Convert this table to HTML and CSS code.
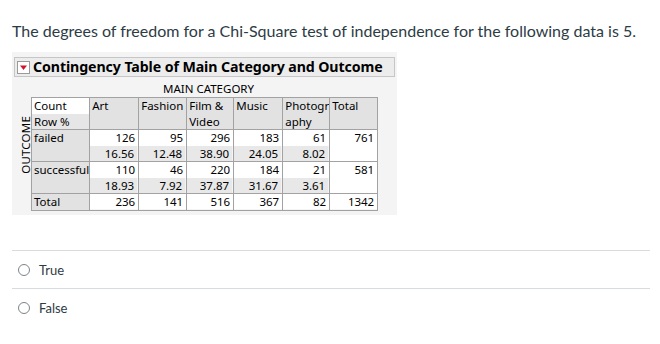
FILE: index.html
```html
<!DOCTYPE html>
<html>
<head>
<meta charset="utf-8">
<link rel="stylesheet" href="styles.css">
</head>
<body>
<div class="question">
  <p class="prompt">The degrees of freedom for a Chi-Square test of independence for the following data is 5.</p>
  <div class="report">
    <div class="report-title">
      <span class="disclosure"><svg width="11" height="11" viewBox="0 0 11 11"><path d="M2 3.5 L9 3.5 L5.5 8 Z" fill="#d0142c"/></svg></span>
      <span class="title-text">Contingency Table of Main Category and Outcome</span>
    </div>
    <div class="main-cat">MAIN CATEGORY</div>
    <div class="table-wrap">
      <div class="outcome"><span>OUTCOME</span></div>
      <table class="ct">
        <colgroup>
          <col class="c-label"><col class="c-art"><col class="c-fash"><col class="c-film"><col class="c-music"><col class="c-photo"><col class="c-total">
        </colgroup>
        <tr class="head">
          <td class="key"><div class="l1">Count</div><div class="l2">Row %</div></td>
          <th>Art</th>
          <th>Fashion</th>
          <th>Film &amp;<br>Video</th>
          <th>Music</th>
          <th>Photogr<br>aphy</th>
          <th>Total</th>
        </tr>
        <tr class="body">
          <td class="rl">failed</td>
          <td><div class="n">126</div><div class="p">16.56</div></td>
          <td><div class="n">95</div><div class="p">12.48</div></td>
          <td><div class="n">296</div><div class="p">38.90</div></td>
          <td><div class="n">183</div><div class="p">24.05</div></td>
          <td><div class="n">61</div><div class="p">8.02</div></td>
          <td><div class="n">761</div><div class="e"></div></td>
        </tr>
        <tr class="body">
          <td class="rl">successful</td>
          <td><div class="n">110</div><div class="p">18.93</div></td>
          <td><div class="n">46</div><div class="p">7.92</div></td>
          <td><div class="n">220</div><div class="p">37.87</div></td>
          <td><div class="n">184</div><div class="p">31.67</div></td>
          <td><div class="n">21</div><div class="p">3.61</div></td>
          <td><div class="n">581</div><div class="e"></div></td>
        </tr>
        <tr class="tot">
          <td class="rl">Total</td>
          <td><div class="n">236</div></td>
          <td><div class="n">141</div></td>
          <td><div class="n">516</div></td>
          <td><div class="n">367</div></td>
          <td><div class="n">82</div></td>
          <td><div class="n">1342</div></td>
        </tr>
      </table>
    </div>
  </div>
  <div class="answers">
    <label class="answer"><span class="radio"></span><span class="answer-text">True</span></label>
    <label class="answer"><span class="radio"></span><span class="answer-text">False</span></label>
  </div>
</div>
</body>
</html>
```

FILE: styles.css
```css
html, body {
  margin: 0;
  padding: 0;
  background: #ffffff;
}
body {
  font-family: Lato, "Open Sans", sans-serif;
  color: #2d3b45;
}
.question {
  padding: 0 10px 0 12px;
}
.prompt {
  margin: 0;
  padding-top: 21px;
  font-size: 16px;
  line-height: 20px;
  height: 31px;
}
.report {
  width: 385px;
  height: 163px;
  box-sizing: border-box;
  background: #f4f4f4;
  padding: 5px 2px 0 2px;
  font-family: "Noto Sans", "Open Sans", sans-serif;
  color: #000;
}
.report-title {
  display: flex;
  align-items: center;
  height: 20px;
  box-sizing: border-box;
  border: 1px solid #c6c6c6;
  background: #ececec;
  padding-left: 2px;
}
.disclosure {
  display: inline-flex;
  align-items: center;
  justify-content: center;
  width: 11px;
  height: 11px;
  background: #fff;
  border: 1px solid #9a9a9a;
  margin-right: 3px;
}
.title-text {
  font-weight: bold;
  font-size: 14.2px;
  line-height: 18px;
  letter-spacing: -0.1px;
}
.main-cat {
  font-size: 11.5px;
  line-height: 14px;
  height: 20px;
  padding-top: 5px;
  box-sizing: border-box;
  padding-left: 149px;
}
.table-wrap {
  display: flex;
  align-items: flex-start;
}
.outcome {
  width: 17px;
  height: 111px;
  display: flex;
  align-items: flex-end;
  justify-content: flex-end;
  padding-bottom: 34px;
  box-sizing: border-box;
}
.outcome span {
  writing-mode: vertical-rl;
  transform: rotate(180deg);
  font-size: 11.5px;
  line-height: 11px;
  letter-spacing: 0.2px;
}
.ct {
  border-collapse: collapse;
  font-size: 11.5px;
  line-height: 15.5px;
  table-layout: fixed;
}
.c-label { width: 58px; }
.c-art { width: 49px; }
.c-fash { width: 48px; }
.c-film { width: 47px; }
.c-music { width: 49px; }
.c-photo { width: 47px; }
.c-total { width: 48px; }
.ct td, .ct th {
  border: 1px solid #a2a2a2;
  padding: 0;
  vertical-align: top;
  white-space: nowrap;
  overflow: hidden;
}
.ct th {
  font-weight: normal;
  text-align: left;
  background: #e2e2e2;
  padding-left: 2px;
  height: 31px;
}
.key .l1 {
  background: #ffffff;
  padding-left: 2px;
}
.key .l2 {
  background: #e6e6e6;
  padding-left: 2px;
}
.rl {
  background: #e2e2e2;
  padding-left: 2px !important;
}
.body td {
  height: 31px;
}
.tot td {
  height: 15px;
}
.tot .n {
  line-height: 15px;
}
.ct .n, .ct .p {
  text-align: right;
  padding-right: 3px;
}
.ct .n {
  background: #fff;
}
.ct .p {
  background: #e8e8e8;
  margin-right: 1px;
}
.ct .e {
  height: 15.5px;
  background: #fff;
}
.answers {
  margin-top: 35px;
  width: 638px;
}
.answer {
  display: flex;
  align-items: center;
  border-top: 1px solid #d9dcde;
  height: 38px;
  box-sizing: border-box;
  padding-left: 6px;
  font-size: 13px;
  color: #2d3b45;
}
.radio {
  width: 10px;
  height: 10px;
  border: 1px solid #7c8489;
  border-radius: 50%;
  margin-right: 9px;
  background: #fff;
}
.answer-text {
  line-height: 16px;
}
```
